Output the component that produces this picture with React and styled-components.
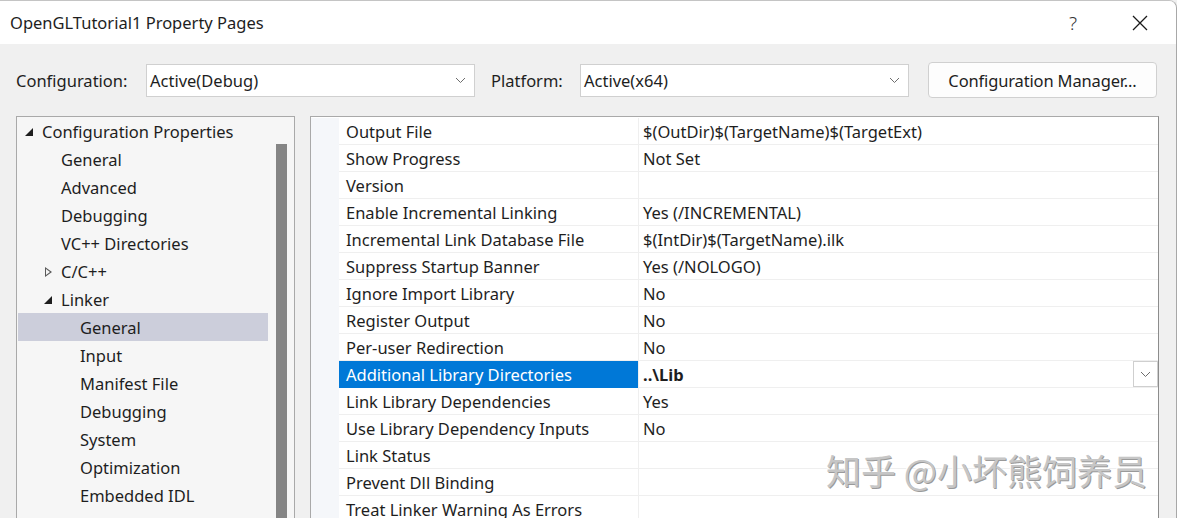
import React from "react";
import styled, { createGlobalStyle } from "styled-components";

const GlobalStyle = createGlobalStyle`
  html, body {
    margin: 0;
    padding: 0;
    background: #f0f0f0;
  }
  body {
    font-family: "Noto Sans", "Open Sans", sans-serif;
    color: #1e1e1e;
  }
`;

const treeItems = [
  { label: "Configuration Properties", level: 0, arrow: "open" },
  { label: "General", level: 1 },
  { label: "Advanced", level: 1 },
  { label: "Debugging", level: 1 },
  { label: "VC++ Directories", level: 1 },
  { label: "C/C++", level: 1, arrow: "closed" },
  { label: "Linker", level: 1, arrow: "open" },
  { label: "General", level: 2, selected: true },
  { label: "Input", level: 2 },
  { label: "Manifest File", level: 2 },
  { label: "Debugging", level: 2 },
  { label: "System", level: 2 },
  { label: "Optimization", level: 2 },
  { label: "Embedded IDL", level: 2 },
  { label: "Windows Manifest", level: 2 },
];

const properties = [
  ["Output File", "$(OutDir)$(TargetName)$(TargetExt)"],
  ["Show Progress", "Not Set"],
  ["Version", ""],
  ["Enable Incremental Linking", "Yes (/INCREMENTAL)"],
  ["Incremental Link Database File", "$(IntDir)$(TargetName).ilk"],
  ["Suppress Startup Banner", "Yes (/NOLOGO)"],
  ["Ignore Import Library", "No"],
  ["Register Output", "No"],
  ["Per-user Redirection", "No"],
  ["Additional Library Directories", "..\\Lib", true],
  ["Link Library Dependencies", "Yes"],
  ["Use Library Dependency Inputs", "No"],
  ["Link Status", ""],
  ["Prevent Dll Binding", ""],
  ["Treat Linker Warning As Errors", ""],
];

function Chevron() {
  return (
    <svg width="11" height="7" viewBox="0 0 11 7">
      <path d="M1 1 L5.5 5.5 L10 1" fill="none" stroke="#6d6d6d" strokeWidth="1" />
    </svg>
  );
}

function App() {
  return (
    <>
      <GlobalStyle />
      <Window>
        <TitleBar>
          <Title>OpenGLTutorial1 Property Pages</Title>
          <TitleButtons>
            <HelpButton>?</HelpButton>
            <CloseButton>
              <svg width="16" height="16" viewBox="0 0 16 16">
                <path d="M1 1 L15 15 M15 1 L1 15" stroke="#1a1a1a" strokeWidth="1.3" />
              </svg>
            </CloseButton>
          </TitleButtons>
        </TitleBar>

        <Toolbar>
          <Label>Configuration:</Label>
          <Combo>
            <span>Active(Debug)</span>
            <Chevron />
          </Combo>
          <Label $gap>Platform:</Label>
          <Combo>
            <span>Active(x64)</span>
            <Chevron />
          </Combo>
          <Button>Configuration Manager...</Button>
        </Toolbar>

        <Content>
          <TreePanel>
            <TreeList>
              {treeItems.map((item, i) => (
                <TreeRow key={i} $level={item.level} $selected={item.selected}>
                  <Arrow>
                    {item.arrow === "open" && <OpenArrow />}
                    {item.arrow === "closed" && <ClosedArrow />}
                  </Arrow>
                  {item.label}
                </TreeRow>
              ))}
            </TreeList>
            <ScrollTrack>
              <ScrollThumb />
            </ScrollTrack>
          </TreePanel>

          <Grid>
            {properties.map(([name, value, selected], i) => (
              <PropRow key={i}>
                <Gutter />
                <NameCell $selected={selected}>{name}</NameCell>
                <ValueCell $bold={selected}>
                  <span>{value}</span>
                  {selected && (
                    <DropButton>
                      <Chevron />
                    </DropButton>
                  )}
                </ValueCell>
              </PropRow>
            ))}
            <Watermark>知乎 @小坏熊饲养员</Watermark>
          </Grid>
        </Content>
      </Window>
    </>
  );
}

export default App;

const Window = styled.div`
  width: 1177px;
  height: 518px;
  overflow: hidden;
  background: #f0f0f0;
  box-sizing: border-box;
  border-top: 1px solid #c4c4c4;
  border-right: 1px solid #a8a8a8;
  border-top-right-radius: 8px;
  display: flex;
  flex-direction: column;
`;

const TitleBar = styled.div`
  height: 43px;
  flex-shrink: 0;
  background: #ffffff;
  display: flex;
  align-items: center;
  justify-content: space-between;
  padding-left: 10px;
`;

const Title = styled.div`
  font-size: 16.5px;
`;

const TitleButtons = styled.div`
  display: flex;
  align-items: center;
  height: 100%;
`;

const HelpButton = styled.div`
  width: 46px;
  text-align: center;
  font-size: 19px;
  font-weight: 300;
  color: #333;
  margin-right: 14px;
`;

const CloseButton = styled.div`
  width: 60px;
  display: flex;
  justify-content: center;
  padding-right: 6px;
`;

const Toolbar = styled.div`
  height: 72px;
  flex-shrink: 0;
  display: flex;
  align-items: center;
  padding-left: 16px;
`;

const Label = styled.div`
  font-size: 16.5px;
  width: ${(p) => (p.$gap ? "89px" : "130px")};
  margin-left: ${(p) => (p.$gap ? "16px" : "0")};
`;

const Combo = styled.div`
  width: 329px;
  height: 33px;
  box-sizing: border-box;
  background: #ffffff;
  border: 1px solid #d0d0d0;
  display: flex;
  align-items: center;
  justify-content: space-between;
  padding: 0 8px 0 3px;
  font-size: 16.5px;
`;

const Button = styled.div`
  margin-left: 19px;
  width: 229px;
  height: 36px;
  box-sizing: border-box;
  background: #fdfdfd;
  border: 1px solid #d0d0d0;
  border-radius: 4px;
  display: flex;
  align-items: center;
  justify-content: center;
  font-size: 16.5px;
  letter-spacing: -0.15px;
`;

const Content = styled.div`
  flex: 1;
  display: flex;
  gap: 15px;
  padding-left: 16px;
  min-height: 0;
`;

const TreePanel = styled.div`
  width: 279px;
  box-sizing: border-box;
  border: 1px solid #a9a9a9;
  border-bottom: none;
  background: #f6f6f6;
  display: flex;
  padding: 0 0 0 1px;
`;

const TreeList = styled.div`
  width: 250px;
  flex-shrink: 0;
`;

const TreeRow = styled.div`
  height: 28px;
  display: flex;
  align-items: center;
  font-size: 16.5px;
  white-space: nowrap;
  padding-left: ${(p) => 5 + p.$level * 19}px;
  background: ${(p) => (p.$selected ? "#cccedb" : "transparent")};
`;

const Arrow = styled.span`
  width: 19px;
  display: inline-flex;
  align-items: center;
`;

const OpenArrow = styled.span`
  width: 0;
  height: 0;
  border-left: 8px solid transparent;
  border-bottom: 8px solid #1e1e1e;
  margin-left: 2px;
  margin-top: 1px;
`;

const ClosedArrow = styled.span`
  position: relative;
  width: 5px;
  height: 9px;
  margin-left: 3px;
  &::before {
    content: "";
    display: block;
    width: 0;
    height: 0;
    border-top: 5px solid transparent;
    border-bottom: 5px solid transparent;
    border-left: 7px solid #5a5a5a;
  }
  &::after {
    content: "";
    position: absolute;
    left: 1px;
    top: 2px;
    width: 0;
    height: 0;
    border-top: 3px solid transparent;
    border-bottom: 3px solid transparent;
    border-left: 4px solid #f6f6f6;
  }
`;

const ScrollTrack = styled.div`
  flex: 1;
  padding-top: 27px;
  display: flex;
  justify-content: center;
`;

const ScrollThumb = styled.div`
  width: 11px;
  height: 400px;
  background: #858585;
`;

const Grid = styled.div`
  position: relative;
  width: 849px;
  box-sizing: border-box;
  border: 1px solid #a9a9a9;
  border-right-color: #8c8c8c;
  border-bottom: none;
  background: #ffffff;
  padding-top: 1px;
`;

const PropRow = styled.div`
  height: 27px;
  display: flex;
  font-size: 16.5px;
`;

const Gutter = styled.div`
  width: 28px;
  flex-shrink: 0;
  background: #f5f7fa;
`;

const NameCell = styled.div`
  width: 299px;
  flex-shrink: 0;
  box-sizing: border-box;
  display: flex;
  align-items: center;
  padding-left: 7px;
  white-space: nowrap;
  background: ${(p) => (p.$selected ? "#0078d7" : "#ffffff")};
  color: ${(p) => (p.$selected ? "#ffffff" : "#1e1e1e")};
  border-bottom: 1px solid ${(p) => (p.$selected ? "#0078d7" : "#efefef")};
`;

const ValueCell = styled.div`
  flex: 1;
  box-sizing: border-box;
  display: flex;
  align-items: center;
  justify-content: space-between;
  padding-left: 4px;
  white-space: nowrap;
  border-left: 1px solid #efefef;
  border-bottom: 1px solid #efefef;
  font-weight: ${(p) => (p.$bold ? 700 : 400)};
`;

const DropButton = styled.div`
  width: 25px;
  height: 26px;
  box-sizing: border-box;
  border: 1px solid #cfcfcf;
  background: #ffffff;
  display: flex;
  align-items: center;
  justify-content: center;
`;

const Watermark = styled.div`
  position: absolute;
  left: 515px;
  top: 327px;
  font-family: "Noto Sans CJK SC", sans-serif;
  font-size: 35px;
  color: #c6c6c6;
  text-shadow: 1px 1px 0 #9a9a9a, -1px -1px 0 #ffffff;
  white-space: nowrap;
`;
